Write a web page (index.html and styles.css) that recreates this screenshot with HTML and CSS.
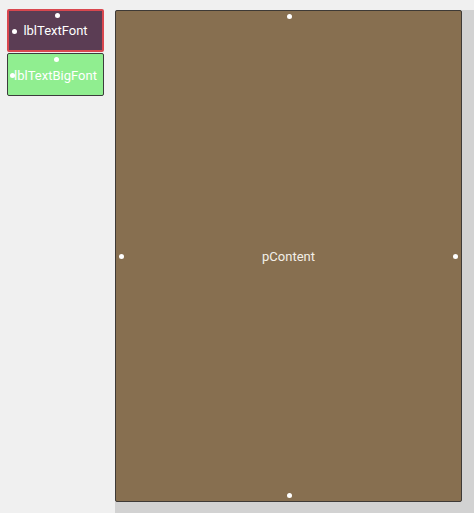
FILE: index.html
```html
<!DOCTYPE html>
<html>
<head>
<meta charset="utf-8">
<link rel="stylesheet" href="styles.css">
</head>
<body>
<div class="app">
  <div class="side">
    <div class="lbl lbl-font">
      <span class="dot dot-top"></span>
      <span class="dot dot-left"></span>
      lblTextFont
    </div>
    <div class="lbl lbl-big">
      <span class="dot dot-top"></span>
      <span class="dot dot-left"></span>
      lblTextBigFont
    </div>
  </div>
  <div class="stage">
    <div class="content">
      <span class="dot dot-top"></span>
      <span class="dot dot-left"></span>
      <span class="dot dot-right"></span>
      <span class="dot dot-bottom"></span>
      pContent
    </div>
  </div>
</div>
</body>
</html>
```
FILE: styles.css
```css
html, body {
  margin: 0;
  padding: 0;
  background: #f0f0f0;
  font-family: "Roboto", "Open Sans", "Liberation Sans", sans-serif;
}
.app {
  display: flex;
  width: 474px;
  height: 513px;
  overflow: hidden;
}
.side {
  width: 115px;
  flex: none;
  padding: 9px 0 0 7px;
  box-sizing: border-box;
  display: flex;
  flex-direction: column;
  gap: 1px;
}
.lbl {
  position: relative;
  width: 97px;
  box-sizing: border-box;
  display: flex;
  align-items: center;
  justify-content: center;
  color: #fff;
  font-size: 13px;
  border-radius: 2px;
}
.lbl-font {
  height: 43px;
  background: #5b3d54;
  border: 2px solid #d9474f;
}
.lbl-big {
  height: 43px;
  background: #90ee90;
  border: 1px solid #3c3c3c;
  padding-top: 2px;
}
.stage {
  flex: 1;
  margin-top: 10px;
  background: #d2d2d2;
}
.content {
  position: relative;
  width: 347px;
  height: 492px;
  box-sizing: border-box;
  background: #876f50;
  border: 1px solid #3e3a36;
  border-radius: 2px;
  display: flex;
  align-items: center;
  justify-content: center;
  color: #f3efe8;
  font-size: 13px;
}
.dot {
  position: absolute;
  width: 5px;
  height: 5px;
  border-radius: 50%;
  background: #fff;
}
.lbl .dot-top { top: 2px; left: 46px; }
.lbl .dot-left { top: 18px; left: 3px; }
.lbl-big .dot-top { top: 3px; left: 46px; }
.lbl-big .dot-left { top: 19px; left: 2px; }
.content .dot-top { top: 3px; left: 171px; }
.content .dot-bottom { bottom: 3px; left: 171px; }
.content .dot-left { top: 243px; left: 3px; }
.content .dot-right { top: 243px; right: 3px; }
```
